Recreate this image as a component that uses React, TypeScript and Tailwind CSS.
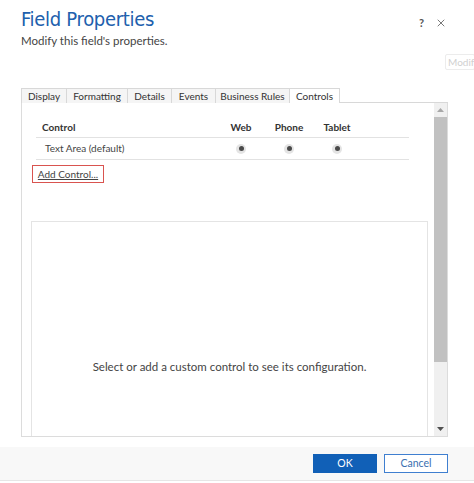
import { X } from "lucide-react";

const tabs = ["Display", "Formatting", "Details", "Events", "Business Rules", "Controls"];
const tabWidths = ["w-[46px]", "w-[61px]", "w-[44px]", "w-[44px]", "w-[74px]", "w-[50px]"];

const Radio = () => (
  <span className="flex h-[10px] w-[10px] items-center justify-center rounded-full bg-[#e4e4e4]">
    <span className="h-[5px] w-[5px] rounded-full bg-[#4a4a4a]" />
  </span>
);

const ScrollBar = () => (
  <div className="flex w-[13px] shrink-0 flex-col bg-[#f0f0f0]">
    <div className="flex h-[14px] items-center justify-center">
      <svg width="7" height="4" viewBox="0 0 7 4">
        <path d="M0 4 L3.5 0 L7 4 Z" fill="#a8a8a8" />
      </svg>
    </div>
    <div className="h-[245px] bg-[#c1c1c1]" />
    <div className="flex-1" />
    <div className="flex h-[14px] items-center justify-center">
      <svg width="7" height="4" viewBox="0 0 7 4">
        <path d="M0 0 L3.5 4 L7 0 Z" fill="#505050" />
      </svg>
    </div>
  </div>
);

export default function App() {
  return (
    <div
      className="relative flex h-[483px] w-[474px] flex-col overflow-hidden bg-white text-[#333]"
      style={{ fontFamily: 'Lato, "Open Sans", sans-serif' }}
    >
      {/* header */}
      <div className="flex items-start justify-between pl-[21px] pr-[27px] pt-[5px]">
        <div>
          <h1
            className="text-[20px] font-light leading-[28px] tracking-[-0.3px] text-[#2160ad]"
            style={{ fontFamily: '"Liberation Sans Narrow", "DejaVu Sans Condensed", Lato, sans-serif' }}
          >
            Field Properties
          </h1>
          <p className="mt-[0px] text-[11.5px] leading-[16px] text-[#444]">
            Modify this field's properties.
          </p>
        </div>
        <div className="mt-[10px] flex items-center gap-[11px] text-[#555]">
          <span className="text-[11px] font-bold">?</span>
          <X size={12} strokeWidth={1.6} />
        </div>
      </div>

      <div className="absolute left-[445px] top-[54px] rounded-[2px] border border-[#ececec] pl-[2px] text-[10px] leading-[14px] text-[#d0d0d0]">
        Modif
      </div>

      {/* tabs */}
      <div className="ml-[21px] mt-[39px] flex h-[15px]">
        {tabs.map((t, i) => (
          <div
            key={t}
            className={`flex ${tabWidths[i]} items-center justify-center border-t border-r border-[#d8d8d8] text-[10px] leading-none text-[#333] ${
              i === 0 ? "border-l" : ""
            } ${t === "Controls" ? "bg-white" : "bg-[#f5f5f5]"}`}
          >
            {t}
          </div>
        ))}
        <div className="mr-[26px] flex-1 border-b border-[#d8d8d8]" />
      </div>

      {/* tab panel */}
      <div className="ml-[21px] flex h-[334px] w-[427px] border-b border-l border-r border-[#dcdcdc]">
        <div className="flex-1 overflow-hidden">
          <div className="ml-[14px] mt-[14px] w-[373px]">
            <div className="grid h-[21px] grid-cols-[181px_48px_48px_48px_1fr] items-center border-b border-[#e2e2e2] text-[10px] font-bold text-[#333]">
              <span className="pl-[6px]">Control</span>
              <span className="text-center">Web</span>
              <span className="text-center">Phone</span>
              <span className="text-center">Tablet</span>
              <span />
            </div>
            <div className="grid h-[22px] grid-cols-[181px_48px_48px_48px_1fr] items-center border-b border-[#e2e2e2] text-[10px] text-[#444]">
              <span className="pl-[9px]">Text Area (default)</span>
              <span className="flex justify-center">
                <Radio />
              </span>
              <span className="flex justify-center">
                <Radio />
              </span>
              <span className="flex justify-center">
                <Radio />
              </span>
              <span />
            </div>
          </div>
          <div className="ml-[10px] mt-[5px] flex h-[18px] w-[72px] items-center justify-center border border-[#d9534f] text-[10px] text-[#444] underline">
            Add Control...
          </div>
          <div className="ml-[9px] mt-[38px] h-[260px] w-[397px] border border-[#e4e4e4] pt-[136px] text-center text-[11.5px] text-[#444]">
            Select or add a custom control to see its configuration.
          </div>
        </div>
        <ScrollBar />
      </div>

      {/* footer */}
      <div className="mt-[10px] flex h-[34px] items-center justify-end gap-[7px] border-b border-[#e6e6e6] bg-[#f8f8f8] pr-[26px]">
        <button className="h-[19px] w-[64px] bg-[#1160b7] text-[10.5px] text-white">OK</button>
        <button className="h-[19px] w-[64px] border border-[#3f7fd0] bg-white text-[10.5px] text-[#3a6fb0]">
          Cancel
        </button>
      </div>
    </div>
  );
}
